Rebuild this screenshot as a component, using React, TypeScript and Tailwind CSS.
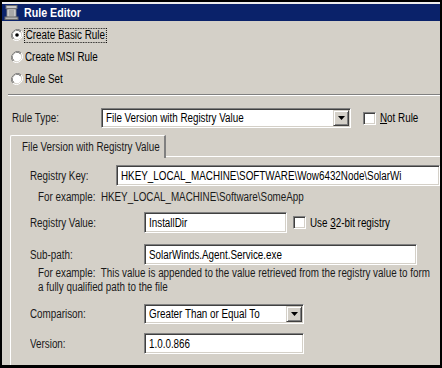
import type { ReactNode } from 'react';

const font = { fontFamily: '"Liberation Sans", Arial, sans-serif' };

// Tahoma-like narrow look: Liberation Sans squeezed horizontally
function T({ children, className = '' }: { children: ReactNode; className?: string }) {
  return <span className={`inline-block origin-left scale-x-[0.82] whitespace-nowrap ${className}`}>{children}</span>;
}

function Radio({ checked }: { checked?: boolean }) {
  return (
    <svg width="12" height="12" viewBox="0 0 12 12" className="shrink-0">
      <path d="M10.2 1.8 A6 6 0 0 0 1.8 10.2" fill="none" stroke="#808080" strokeWidth="1" />
      <path d="M9.4 2.6 A4.9 4.9 0 0 0 2.6 9.4" fill="none" stroke="#404040" strokeWidth="1" />
      <path d="M1.8 10.2 A6 6 0 0 0 10.2 1.8" fill="none" stroke="#ffffff" strokeWidth="1" />
      <circle cx="6" cy="6" r="4.3" fill="#ffffff" />
      {checked && <circle cx="6" cy="6" r="1.8" fill="#000000" />}
    </svg>
  );
}

function Checkbox() {
  return (
    <div className="w-[13px] h-[13px] shrink-0 bg-white border border-t-[#808080] border-l-[#808080] border-b-white border-r-white shadow-[inset_1px_1px_0_#404040,inset_-1px_-1px_0_#d4d0c8]" />
  );
}

function TextBox({ width, children }: { width: string; children?: ReactNode }) {
  return (
    <div
      className={`${width} h-[21px] bg-white flex items-center pl-[4px] text-[12px] text-black overflow-hidden border border-t-[#808080] border-l-[#808080] border-b-white border-r-white shadow-[inset_1px_1px_0_#404040,inset_-1px_-1px_0_#d4d0c8]`}
    >
      <T>{children}</T>
    </div>
  );
}

function Combo({ width, children }: { width: string; children: ReactNode }) {
  return (
    <div
      className={`${width} h-[20px] bg-white flex items-center border border-t-[#808080] border-l-[#808080] border-b-white border-r-white shadow-[inset_1px_1px_0_#404040,inset_-1px_-1px_0_#d4d0c8]`}
    >
      <span className="flex-1 min-w-0 pl-[4px] text-[12px] text-black overflow-hidden">
        <T>{children}</T>
      </span>
      <div className="w-[16px] h-[16px] mr-[1px] shrink-0 bg-[#d4d0c8] flex items-center justify-center border border-t-[#d4d0c8] border-l-[#d4d0c8] border-b-[#404040] border-r-[#404040] shadow-[inset_1px_1px_0_#ffffff,inset_-1px_-1px_0_#808080]">
        <svg width="7" height="4" viewBox="0 0 7 4">
          <path d="M0 0 H7 L3.5 4 Z" fill="#000" />
        </svg>
      </div>
    </div>
  );
}

function FieldRow({ label, labelWidth = 'w-[114px]', children, className = '' }: { label: string; labelWidth?: string; children: ReactNode; className?: string }) {
  return (
    <div className={`flex items-center ${className}`}>
      <span className={`${labelWidth} shrink-0 text-[12px] text-[#1a1a1a]`}>
        <T>{label}</T>
      </span>
      {children}
    </div>
  );
}

export default function App() {
  return (
    <div className="w-[442px] h-[368px] bg-black pt-[2px] pl-[2px] pr-[2px] pb-[3px] overflow-hidden" style={font}>
      <div className="h-full flex flex-col border-t-2 border-[#eeeeee] overflow-hidden">
        {/* Title bar */}
        <div className="h-[17px] bg-[#0a226a] flex items-center pl-[2px] gap-[4px] shrink-0">
          <svg width="16" height="15" viewBox="0 0 16 15">
            <rect x="2" y="0.5" width="11" height="3" fill="#c8c8c8" stroke="#6a6a6a" />
            <rect x="3" y="4" width="9" height="8" fill="#e6e6e6" stroke="#7a7a7a" />
            <path d="M4.5 6 H10.5 M4.5 8 H10.5 M4.5 10 H10.5" stroke="#6a6a6a" />
            <rect x="1" y="12" width="13" height="2.5" fill="#b4b4b4" stroke="#6a6a6a" />
          </svg>
          <T className="text-white font-bold text-[13px] leading-none">Rule Editor</T>
        </div>

        {/* Body */}
        <div className="flex-1 bg-[#d4d0c8] pt-[3px] flex flex-col">
          <div className="pl-[9px] text-[12px] text-black">
            <div className="h-[22px] flex items-center gap-[1px]">
              <Radio checked />
              <T className="border border-dotted border-black px-[1px] leading-[13px]">Create Basic Rule</T>
            </div>
            <div className="h-[22px] flex items-center gap-[2px]">
              <Radio />
              <T>Create MSI Rule</T>
            </div>
            <div className="h-[22px] flex items-center gap-[2px]">
              <Radio />
              <T>Rule Set</T>
            </div>
          </div>

          {/* Separator */}
          <div className="ml-[6px] mt-[4px] border-t border-[#808080] border-b border-b-white" />

          {/* Rule type */}
          <div className="mt-[12px] flex items-center pl-[10px]">
            <span className="w-[89px] text-[12px] text-[#1a1a1a]">
              <T>Rule Type:</T>
            </span>
            <Combo width="w-[250px]">File Version with Registry Value</Combo>
            <div className="ml-[12px] flex items-center gap-[4px]">
              <Checkbox />
              <T className="text-[12px] text-black">
                <span className="underline">N</span>ot Rule
              </T>
            </div>
          </div>

          {/* Tab */}
          <div className="mt-[7px] pl-[8px] flex items-end">
            <div className="w-[156px] h-[23px] bg-[#d4d0c8] border-t border-l border-white border-r-2 border-r-[#808080] rounded-tl-[2px] flex items-center pl-[11px] text-[12px] text-[#1a1a1a] -mb-[1px] relative z-10">
              <T>File Version with Registry Value</T>
            </div>
            <div className="flex-1 border-b border-white" />
          </div>

          {/* Tab panel */}
          <div className="flex-1 ml-[8px] border-l border-white pl-[19px] pt-[8px] flex flex-col">
            <FieldRow label="Registry Key:" labelWidth="w-[86px]">
              <TextBox width="flex-1 min-w-0">HKEY_LOCAL_MACHINE\SOFTWARE\Wow6432Node\SolarWi</TextBox>
            </FieldRow>
            <div className="mt-[4px] h-[14px] pl-[8px] text-[12px] text-[#1a1a1a] leading-[14px]">
              <T>For example:&nbsp; HKEY_LOCAL_MACHINE\Software\SomeApp</T>
            </div>
            <FieldRow label="Registry Value:" className="mt-[8px]">
              <TextBox width="w-[143px]">InstallDir</TextBox>
              <div className="ml-[6px] flex items-center gap-[4px]">
                <Checkbox />
                <T className="text-[12px] text-black">
                  Use <span className="underline">3</span>2-bit registry
                </T>
              </div>
            </FieldRow>
            <FieldRow label="Sub-path:" className="mt-[11px]">
              <TextBox width="w-[273px]">SolarWinds.Agent.Service.exe</TextBox>
            </FieldRow>
            <div className="mt-[1px] pl-[8px] text-[12px] text-[#1a1a1a] leading-[14px] flex flex-col">
              <T>For example:&nbsp; This value is appended to the value retrieved from the registry value to form</T>
              <T>a fully qualified path to the file</T>
            </div>
            <FieldRow label="Comparison:" className="mt-[10px]">
              <Combo width="w-[160px]">Greater Than or Equal To</Combo>
            </FieldRow>
            <FieldRow label="Version:" className="mt-[9px]">
              <TextBox width="w-[160px]">1.0.0.866</TextBox>
            </FieldRow>
          </div>
        </div>
      </div>
    </div>
  );
}
